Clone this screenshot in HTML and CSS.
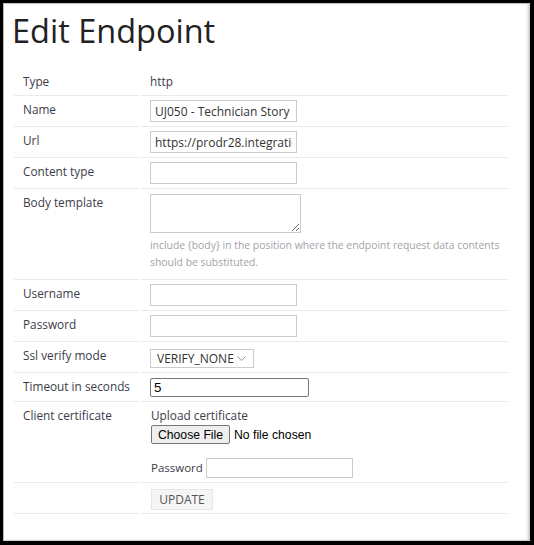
FILE: index.html
```html
<!DOCTYPE html>
<html lang="en">
<head>
<meta charset="utf-8">
<title>Edit Endpoint</title>
<link rel="stylesheet" href="styles.css">
</head>
<body>
<div class="frame">
  <h1 class="title">Edit Endpoint</h1>
  <table class="form">
    <tr class="row-text">
      <th>Type</th>
      <td class="plain">http</td>
    </tr>
    <tr>
      <th>Name</th>
      <td class="field"><input class="text" type="text" value="UJ050 - Technician Story"></td>
    </tr>
    <tr>
      <th>Url</th>
      <td class="field"><input class="text" type="text" value="https://prodr28.integration.example.com/api"></td>
    </tr>
    <tr>
      <th>Content type</th>
      <td class="field"><input class="text" type="text" value=""></td>
    </tr>
    <tr>
      <th>Body template</th>
      <td class="field body-cell">
        <textarea class="area"></textarea>
        <p class="help">include {body} in the position where the endpoint request data contents should be substituted.</p>
      </td>
    </tr>
    <tr>
      <th>Username</th>
      <td class="field"><input class="text" type="text" value=""></td>
    </tr>
    <tr>
      <th>Password</th>
      <td class="field"><input class="text" type="password" value=""></td>
    </tr>
    <tr>
      <th>Ssl verify mode</th>
      <td class="field ssl-cell">
        <span class="select-wrap">
          <select class="select">
            <option>VERIFY_NONE</option>
            <option>VERIFY_PEER</option>
          </select>
          <svg class="chevron" width="9" height="5" viewBox="0 0 9 5"><path d="M0.5 0.5 L4.5 4.5 L8.5 0.5" fill="none" stroke="#8a8a8a" stroke-width="0.9"/></svg>
        </span>
      </td>
    </tr>
    <tr>
      <th>Timeout in seconds</th>
      <td class="field timeout-cell"><input class="number" type="text" value="5"></td>
    </tr>
    <tr>
      <th>Client certificate</th>
      <td class="field cert-cell">
        <div class="cert-title">Upload certificate</div>
        <input class="file" type="file">
        <div class="cert-pass"><span class="cert-label">Password</span> <input class="text small" type="password" value=""></div>
      </td>
    </tr>
    <tr>
      <th></th>
      <td class="field update-cell"><button class="update" type="button">UPDATE</button></td>
    </tr>
  </table>
</div>
</body>
</html>
```
FILE: styles.css
```css
html, body {
  margin: 0;
  padding: 0;
}

body {
  background: #000;
  font-family: "Open Sans", "Liberation Sans", sans-serif;
  color: #3c3c48;
}

.frame {
  box-sizing: border-box;
  height: 538px;
  margin: 3px 4px 0 3px;
  padding: 0 8px;
  background: #fff;
  border-left: 1px solid #b8b8b8;
  border-top: 1px solid #c4c4c4;
  border-bottom: 1px solid #d0d0d0;
  box-shadow: inset -3px 0 3px -1px rgba(0, 0, 0, 0.22);
}

.title {
  margin: 5px 0 0;
  font-size: 32.5px;
  line-height: 43px;
  font-weight: 400;
  color: #222;
}

.form {
  margin-top: 16px;
  width: 498px;
  border-collapse: separate;
  border-spacing: 2px 0;
}

.form th,
.form td {
  vertical-align: top;
  border-bottom: 1px solid #e8ecf2;
  padding: 5px 9px 6px;
  font-size: 11.8px;
  line-height: 16px;
  text-align: left;
}

.form th {
  width: 107px;
  font-weight: 400;
  white-space: nowrap;
}

.form td.field {
  padding: 4px 9px 4px;
}

.text {
  box-sizing: border-box;
  display: block;
  width: 147px;
  height: 22px;
  margin: 0;
  padding: 0 4px;
  border: 1px solid #cbcbcb;
  border-radius: 0;
  font-family: "Open Sans", "Liberation Sans", sans-serif;
  font-size: 12px;
  color: #333;
  background: #fff;
  outline: none;
}

.form td.body-cell {
  padding: 4px 1px 8px 9px;
}

.area {
  box-sizing: border-box;
  display: block;
  width: 151px;
  height: 39px;
  margin: 1px 0 0;
  border: 1px solid #cbcbcb;
  border-radius: 0;
}

.help {
  margin: 4px 0 0;
  font-size: 10.4px;
  line-height: 17px;
  color: #a3a3a8;
}

.form td.ssl-cell {
  padding-top: 7px;
}

.select-wrap {
  position: relative;
  display: block;
  width: 104px;
}

.select {
  box-sizing: border-box;
  display: block;
  width: 104px;
  height: 19px;
  margin: 0;
  padding: 0 0 0 6px;
  border: 1px solid #cbcbcb;
  border-radius: 0;
  background: #fff;
  -webkit-appearance: none;
  appearance: none;
  font-family: "Open Sans", "Liberation Sans", sans-serif;
  font-size: 12px;
  color: #333;
  outline: none;
}

.chevron {
  position: absolute;
  left: 87px;
  top: 7px;
}

.form td.timeout-cell {
  padding-top: 5px;
}

.number {
  box-sizing: border-box;
  display: block;
  width: 159px;
  height: 19px;
  margin: 0;
  padding: 0 3px;
  border: 1px solid #767676;
  border-radius: 2px;
  font-family: "Liberation Sans", Arial, sans-serif;
  font-size: 13.33px;
  color: #000;
  outline: none;
}

.form td.cert-cell {
  padding-top: 5px;
  padding-bottom: 4px;
}

.cert-title {
  line-height: 16px;
  margin-left: 1px;
}

.file {
  display: block;
  margin: 2px 0 0 1px;
  height: 19px;
  font-family: "Liberation Sans", Arial, sans-serif;
  font-size: 12.2px;
  color: #000;
}

.file::file-selector-button {
  height: 19px;
  margin: 0 4px 0 0;
  padding: 0 6px;
  border: 1px solid #767676;
  border-radius: 2px;
  background: #efefef;
  font-family: "Liberation Sans", Arial, sans-serif;
  font-size: 12.2px;
  color: #000;
}

.cert-pass {
  display: flex;
  align-items: center;
  gap: 3px;
  margin-top: 14px;
  margin-left: 1px;
}

.cert-label {
  font-size: 11.5px;
}

.text.small {
  width: 147px;
  height: 20px;
}

.form td.update-cell {
  padding-top: 6px;
  padding-bottom: 3px;
}

.update {
  display: block;
  box-sizing: border-box;
  width: 62px;
  height: 21px;
  margin: 0 0 0 1px;
  padding: 0;
  border: 1px solid #e6e6e6;
  border-radius: 0;
  background: #f5f5f5;
  font-family: "Open Sans", "Liberation Sans", sans-serif;
  font-size: 12px;
  color: #555;
}
```
